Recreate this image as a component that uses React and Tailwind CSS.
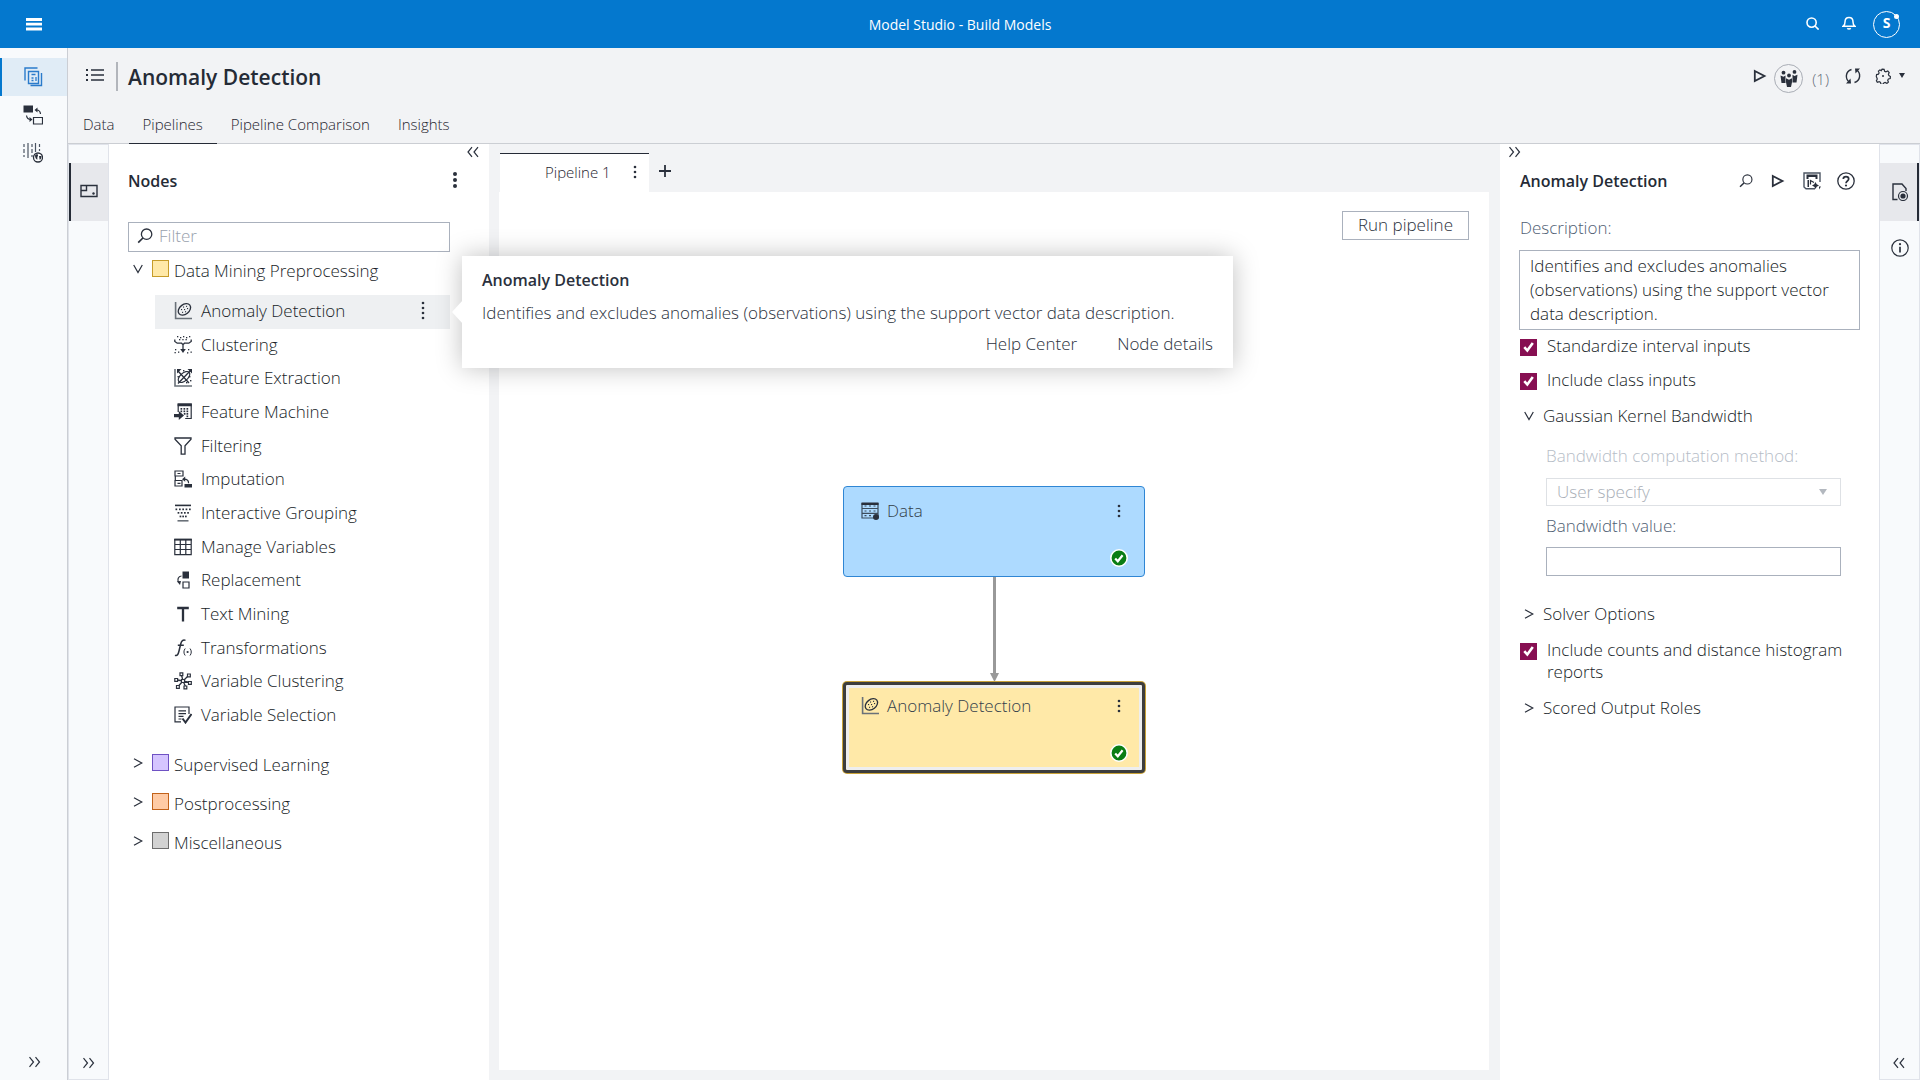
import { useState } from "react";

const INK = "#2a303c";

function Svg({ size = 18, children, className = "", w, ...rest }) {
  return (
    <svg width={w || size} height={size} viewBox={`0 0 ${w || size} ${size}`} fill="none" stroke={INK} strokeWidth="1.2" className={"shrink-0 " + className} aria-hidden="true" {...rest}>
      {children}
    </svg>
  );
}

function Fill({ d }) {
  return <path d={d} fill={INK} stroke="none" />;
}

function Dots({ points, s = 1.4 }) {
  return points.map(([x, y], i) => <rect key={i} x={x} y={y} width={s} height={s} fill={INK} stroke="none" />);
}

function Kebab({ n = 3, r = 1.4, gap = 5 }) {
  const h = (n - 1) * gap + 4;
  return (
    <svg width="6" height={h} viewBox={`0 0 6 ${h}`} fill={INK} aria-hidden="true">
      {Array.from({ length: n }, (_, i) => <circle key={i} cx="3" cy={2 + i * gap} r={r} />)}
    </svg>
  );
}

function DoubleChevron({ left }) {
  return (
    <Svg size={12} w={14}>
      <path d={left ? "M6 1.200 2 6l4 4.800M12 1.200 8 6l4 4.800" : "M1.500 1.200 5.500 6l-4 4.800M7.500 1.200 11.500 6l-4 4.800"} />
    </Svg>
  );
}

function Chevron({ open }) {
  return (
    <Svg size={10}>
      <path d={open ? "M.7 1 5 8.6 9.3 1" : "M1 .7 8.8 5 1 9.3"} />
    </Svg>
  );
}

const Play = () => <Svg size={14}><path d="M1.800 2 11.500 7 1.800 12Z" strokeWidth="1.800" /></Svg>;

const Lens = ({ size = 16 }) => (
  <svg width={size} height={size} viewBox="0 0 16 16" fill="none" stroke={INK} strokeWidth="1.3" className="shrink-0" aria-hidden="true">
    <circle cx="9.6" cy="6.2" r="5.2" />
    <path d="M5.9 10 1.2 14.6" strokeWidth="1.7" />
  </svg>
);

const AnomalyIcon = () => (
  <Svg>
    <path d="M1.6 0v16.5H18" stroke="#6a7179" strokeWidth="1.6" />
    <ellipse cx="10.4" cy="7.4" rx="6.9" ry="4.8" transform="rotate(-38 10.4 7.4)" strokeWidth="1.3" />
    <Dots points={[[9, 4.5], [12, 3.8], [7, 7], [10, 7], [13, 6], [8, 9.8], [11, 9.2]]} s={1.1} />
  </Svg>
);

const icons = {
  anomaly: <AnomalyIcon />,
  clustering: (
    <Svg>
      <Dots points={[[3, 0], [6, 1], [9, 0], [12, 1], [15, 0], [5, 3], [8.3, 3], [11.5, 3], [1, 13], [4, 15.5], [0.5, 16], [14, 13], [16.5, 15.5], [13, 16.2]]} s={1.3} />
      <path d="M.8 3.5v2l2.4 1.7h4.4L9 8.6l1.4-1.4h4.4l2.4-1.7v-2M9 8.6v6" strokeWidth="1.3" />
      <Fill d="M6.2 13h5.6L9 17Z" />
    </Svg>
  ),
  extraction: (
    <Svg>
      <path d="M1 0v17h17" stroke="#6a7179" strokeWidth="1.6" />
      <ellipse cx="10" cy="8" rx="7" ry="3.8" transform="rotate(-42 10 8)" strokeWidth="1.2" />
      <path d="M4 14.5 16.5 1.5M4 2l11 12" strokeWidth="1.3" />
      <Fill d="M13.5 0H18v4.5ZM3 0v4.5L7.5 0Z" />
      <Dots points={[[15, 7], [12, 13], [3.5, 7], [16, 11], [9, 1]]} />
    </Svg>
  ),
  machine: (
    <Svg>
      <path d="M4.2 9V1h13v14.5h-6" />
      <Fill d="M3.6.4h14.2v2.8H3.6ZM0 11h4.8V8l5.2 4.6L4.8 17v-2.8H0Z" />
      <Dots points={[[6.5, 5], [9.5, 5], [12.5, 5], [6.5, 7.5], [9.5, 7.5], [12.5, 7.5], [9.8, 10], [12.5, 10], [12.5, 12.5]]} s={1.7} />
    </Svg>
  ),
  filtering: <Svg><path d="M1 1h16v1.2l-6 6.6v8.4H7.2V8.8L1 2.2Z" strokeWidth="1.3" /></Svg>,
  imputation: (
    <Svg>
      <path d="M1 1h8v5H1ZM1 10.5h7V16H1ZM1.3 6v4.5M3.5 3.5h3M3.5 13.3h3M10 9.2c3 0 4.6 1.4 4.6 4" />
      <Fill d="M8 9.2 11.2 6.6v5.2ZM10.5 14H18v3.4h-7.5Z" />
    </Svg>
  ),
  grouping: (
    <Svg>
      <path d="M1 1.4h16" strokeWidth="1.6" />
      <path d="M3.5 16.8h11" stroke="#6a7179" strokeWidth="1.6" />
      <Dots points={[[1.5, 4.5], [5, 4.5], [8.3, 4.5], [11.6, 4.5], [15, 4.5], [3.6, 8], [6.8, 8], [10, 8], [13.2, 8], [5.6, 11.6], [8.3, 11.6], [11, 11.6]]} s={1.7} />
    </Svg>
  ),
  manage: (
    <Svg>
      <path d="M.8 1.5h16.4v15.2H.8ZM6.3 2v14.5M11.8 2v14.5M1 6.5h16M1 11.5h16" />
      <path d="M.2 1.6h17.6" strokeWidth="2" />
    </Svg>
  ),
  replacement: (
    <Svg>
      <Fill d="M8.5.5H15V7.5H8.5Z" />
      <path d="M9 11h6v6H9ZM7.5 5C4.2 5.2 3 8.5 4.600 11.5" />
      <Fill d="M2.8 10.2 7 10 6 14Z" />
    </Svg>
  ),
  text: <Svg><path d="M3.2 3h11.6M9 3v13.6" strokeWidth="2.3" /></Svg>,
  transform: (
    <Svg>
      <path d="M1 16.3c2.2 1 3.2-.8 4-4.3L6.7 5c.8-3 2.3-4.6 4.8-3.6M3.8 6.2h6" strokeWidth="1.5" />
      <path d="M11.2 9.5c-1.7 2-1.7 5 0 7M16 9.5c1.7 2 1.7 5 0 7" strokeWidth="1" />
      <circle cx="13.6" cy="13" r="1.1" fill={INK} stroke="none" />
    </Svg>
  ),
  varcluster: (
    <Svg>
      <path d="M9 9 3.5 8M9 9 7.5 3M9 9l5-5M9 9l6.5 1.5M9 9l2.5 5.5M9 9l-4.5 5" strokeWidth="1.3" />
      <g fill="#fff" strokeWidth="1.2">
        <path d="M7.5 7.5h3v3h-3ZM.8 6.5h2.8v2.8H.8ZM6 .8h2.8v2.8H6ZM13.5 2h2.8v2.8h-2.8ZM14.5 9.5h2.8v2.8h-2.8ZM10 14h2.8v2.8H10ZM2.5 13.5h2.8v2.8H2.5Z" />
      </g>
    </Svg>
  ),
  varselect: (
    <Svg>
      <path d="M7 15.8H1V1h14v7M4.5 4.8h7.5M4.5 7.6h7.5M4.5 10.4h5M4.5 13h3" />
      <path d="m8.5 12.5 3 4L17.5 8" strokeWidth="2" />
    </Svg>
  ),
};

const preprocessing = [
  ["Anomaly Detection", "anomaly"],
  ["Clustering", "clustering"],
  ["Feature Extraction", "extraction"],
  ["Feature Machine", "machine"],
  ["Filtering", "filtering"],
  ["Imputation", "imputation"],
  ["Interactive Grouping", "grouping"],
  ["Manage Variables", "manage"],
  ["Replacement", "replacement"],
  ["Text Mining", "text"],
  ["Transformations", "transform"],
  ["Variable Clustering", "varcluster"],
  ["Variable Selection", "varselect"],
];

const groups = [
  ["Supervised Learning", "border-[#6f52c4] bg-[#d5c5ff]"],
  ["Postprocessing", "border-[#c2621a] bg-[#ffcba5]"],
  ["Miscellaneous", "border-[#6d6d6d] bg-[#d2d2d2]"],
];

function TopBar() {
  return (
    <header className="grid h-12 shrink-0 grid-cols-[1fr_auto_1fr] items-center bg-[#0478ce] text-white">
      <button aria-label="Menu" className="ml-[26px] w-4">
        <svg width="16" height="14" viewBox="0 0 16 14" fill="#fff" aria-hidden="true"><path d="M0 1h16v3H0ZM0 5.8h16v2.6H0ZM0 10.5h16v3H0Z" /></svg>
      </button>
      <h1 className="pt-0.5 text-[14px] font-normal leading-5">Model Studio - Build Models</h1>
      <div className="flex items-center justify-end pr-5">
        <button aria-label="Search" className="mr-[23px] pb-0.5">
          <svg width="13" height="13" viewBox="0 0 13 13" fill="none" stroke="#fff" strokeWidth="1.6" aria-hidden="true"><circle cx="5.6" cy="5.6" r="4.6" /><path d="m9 9 3.6 3.600" /></svg>
        </button>
        <button aria-label="Notifications" className="mr-[17px] pb-0.5">
          <svg width="14" height="14" viewBox="0 0 14 14" fill="none" stroke="#fff" strokeWidth="1.5" aria-hidden="true"><path d="M1.2 10.2c1.6-1 1.8-2.4 1.8-4.2C3 3.2 4.6 1.6 7 1.6S11 3.2 11 6c0 1.8.2 3.2 1.8 4.2Z" /><path d="M5.3 12.3c.8 1 2.6 1 3.4 0" /></svg>
        </button>
        <button aria-label="Account" className="relative flex size-[27px] items-center justify-center rounded-full border border-white pb-0.5 text-[14px] font-bold leading-4">
          S
          <span className="absolute right-0 top-0.5 size-[5px] rounded-full bg-white" />
        </button>
      </div>
    </header>
  );
}

function AppRail() {
  return (
    <nav aria-label="Applications" className="flex w-[68px] shrink-0 flex-col border-r border-[#cbced4] bg-[#f8fafc] pt-[10px]">
      <button aria-label="Build models" className="flex h-[38px] items-center justify-center border-l-2 border-[#0478ce] bg-[#e0ecf6] pr-0.5">
        <Svg size={20} stroke="#2a7bcb"><path d="M1 13.5V1h12.5M4.500 4.5h10v12h-10ZM17.500 6v12.500H6.5" strokeWidth="1.4" /><path d="M7.5 7.5h4M12 10v4M7.5 11h2M7.5 13.500h2" strokeWidth="1.3" /></Svg>
      </button>
      <button aria-label="Replace models" className="flex h-[38px] items-center justify-center pr-0.5">
        <Svg size={20}><Fill d="M.5.5h9.500v7H.5Z" /><path d="M10.5 12.5h9v6.500h-9ZM13.5 5c2.5 0 3.8 1.5 4 4M3.5 10.5c.3 2.5 1.5 4 4.500 4" /><Fill d="m11.5 5 3-2.600v5.200ZM9.5 14.500 6.5 12v5Z" /></Svg>
      </button>
      <button aria-label="Global data" className="flex h-[38px] items-center justify-center pr-0.5">
        <Svg size={20}><path d="M1 1v3M1 6v4M1 12v2M5 0v15M9 1v3M9 6v4M9 12v2M12.5 0v9M16.5 1v3M16.5 6v2" stroke="#4c5563" strokeWidth="1.2" /><circle cx="15" cy="14.5" r="4.5" fill="#fff" strokeWidth="1.3" /><Fill d="M12 12.5c1-1.800 3.500-1.500 3 0s-1 2-.5 4c-1.500 0-2.500-2.200-2.500-4ZM16 13h2.500c0 2.500-1 3.500-1.800 3.700Z" /></Svg>
      </button>
      <button aria-label="Expand application bar" className="mb-3 ml-7 mt-auto w-4"><DoubleChevron /></button>
    </nav>
  );
}

const tabs = ["Data", "Pipelines", "Pipeline Comparison", "Insights"];

function ProjectHeader() {
  return (
    <div className="border-b border-[#cbced3] bg-[#f2f3f5]">
      <div className="flex h-[57px] items-center">
        <button aria-label="Project list" className="ml-[18px] pb-[3px]">
          <Svg size={14} w={18}><path d="M5 2h13M5 7h13M5 12h13" strokeWidth="1.3" /><Dots points={[[0, 1], [0, 6], [0, 11]]} s={2} /></Svg>
        </button>
        <span className="ml-3 h-[29px] w-0.5 bg-[#b2b5bb]" />
        <h2 className="ml-[10px] text-[21px] font-semibold leading-7 text-[#252b36]">Anomaly Detection</h2>
        <div className="ml-auto flex items-center pr-[15px]">
          <button aria-label="Run" className="mb-0.5 mr-[7px]"><Play /></button>
          <button aria-label="Collaborators" className="mt-1 flex size-[29px] items-center justify-center rounded-full border border-[#a9adb5]">
            <Svg size={18}>
              <g fill={INK} stroke="none"><circle cx="3.5" cy="2.700" r="1.9" /><circle cx="14.5" cy="1.900" r="1.9" /><circle cx="9" cy="5.500" r="1.9" /><path d="M.5 5.500l3 1.200 2-1.200v7.500H1.500ZM12.500 4.700l2 1.200 3-1.200-1 7.700h-4ZM6 8.300l3 1.500 3-1.500v4l-1 4.700H7l-1-4.700Z" /></g>
            </Svg>
          </button>
          <span className="ml-[9px] mt-1 text-[15px] leading-5 text-[#636a77]">(1)</span>
          <button aria-label="Refresh" className="mb-0.5 ml-4">
            <Svg size={16}><path d="M6.500 1.500C0 3.500.2 11 4.200 14M9.500 14.500c6.500-2 6.300-9.500 2.300-12.500" strokeWidth="1.400" /><Fill d="M10 .5h5L10.500 5.500ZM6 15.500H1L5.500 10.500Z" /></Svg>
          </button>
          <button aria-label="Settings" className="mb-0.5 ml-[14px] flex items-center gap-2">
            <Svg size={16}>
              <path d="m6.700 1.200 2 .1.500 1.900 1.300.6 1.900-.8 1.400 1.500-.8 1.800.5 1.300 1.500.9-.2 2-1.800.5-.7 1.300.7 1.800-1.500 1.300-1.800-.9-1.300.5-1 1.400-1.900-.3-.4-1.800-1.300-.7-1.900.7L1 12.700l.9-1.700-.5-1.300L.9 8.500l.3-1.900 1.800-.4.700-1.300L3 3.100l1.500-1.200 1.400.7Z" strokeWidth="1.200" transform="translate(.4 0)" />
              <circle cx="8" cy="8" r="1" fill={INK} stroke="none" />
            </Svg>
            <svg width="6" height="5" fill={INK} aria-hidden="true"><path d="M0 0h6L3 5Z" /></svg>
          </button>
        </div>
      </div>
      <div role="tablist" className="flex h-[38px] pl-px text-[15px] leading-5 text-[#1f2530]">
        {tabs.map((t) => (
          <button
            key={t}
            role="tab"
            aria-selected={t === "Pipelines"}
            className={"-mb-px flex items-center border-b px-[14px] " + (t === "Pipelines" ? "border-[#252b36]" : "border-transparent")}
          >
            {t}
          </button>
        ))}
      </div>
    </div>
  );
}

function Popover() {
  return (
    <div role="dialog" aria-label="Anomaly Detection" className="absolute -top-[39px] left-[307px] z-10 w-[771px] bg-white px-5 pb-3 pt-3 text-[#2b313d] shadow-[0_0_24px_rgba(0,0,0,0.25)]">
      <svg width="11" height="24" viewBox="0 0 11 24" fill="#fff" className="absolute -left-[10px] top-11" aria-hidden="true"><path d="M11 0v24L0 12Z" /></svg>
      <h3 className="text-[16px] font-semibold leading-6">Anomaly Detection</h3>
      <p className="mt-[9px] whitespace-nowrap leading-6">Identifies and excludes anomalies (observations) using the support vector data description.</p>
      <div className="mt-[7px] flex justify-end gap-10 leading-6">
        <button>Help Center</button>
        <button>Node details</button>
      </div>
    </div>
  );
}

function NodesPanel() {
  return (
    <>
      <div className="flex w-[41px] shrink-0 flex-col border border-[#e0e3ea] bg-[#f8fafc] pt-[18px]">
        <button aria-label="Nodes" className="flex h-[58px] items-center justify-center border-l-2 border-[#252b36] bg-[#e7e8ec] pb-0.5 pr-0.5">
          <Svg size={14} w={18}><path d="M1 1.5h16v11H1ZM1 6.5h5.500V1.500" strokeWidth="1.4" /><circle cx="13.5" cy="9.5" r="1.2" fill={INK} stroke="none" /></Svg>
        </button>
        <button aria-label="Expand" className="mb-[10px] ml-[13px] mt-auto w-4"><DoubleChevron /></button>
      </div>
      <section aria-label="Nodes" className="w-[380px] shrink-0 bg-white pl-[19px] pr-[39px]">
        <div className="-mr-[30px] flex h-4 items-center justify-end"><button aria-label="Collapse nodes"><DoubleChevron left /></button></div>
        <div className="flex h-[42px] items-center justify-between">
          <h3 className="text-[16px] font-semibold leading-6 text-[#252b36]">Nodes</h3>
          <button aria-label="Nodes menu" className="-mr-[11px] px-[3px] pb-0.5"><Kebab r={2} gap={6} /></button>
        </div>
        <label className="mt-5 flex h-[30px] items-center gap-[6px] border border-[#aab1bd] px-2 pb-0.5">
          <Lens />
          <input aria-label="Filter" placeholder="Filter" className="w-full outline-none placeholder:text-[#98a1ad]" />
        </label>
        <div className="flex h-[43px] items-center pb-1.5">
          <button aria-label="Collapse group" className="-mt-1 ml-[5px]"><Chevron open /></button>
          <span className="-mt-1 ml-[9px] size-[17px] border border-[#c69c29] bg-[#ffe9a8]" />
          <span className="ml-[5px]">Data Mining Preprocessing</span>
        </div>
        <ul className="ml-[27px] grid h-[438px] auto-rows-fr">
          {preprocessing.map(([name, icon], i) => (
            <li key={name} className={"relative flex items-center pb-0.5 pl-[19px] " + (i === 0 ? "bg-[#eef0f2]" : "")}>
              <button className="flex items-center gap-[9px] leading-6">{icons[icon]}{name}</button>
              {i === 0 && (
                <>
                  <button aria-label="Node menu" className="ml-auto mr-6"><Kebab n={4} r={1.3} /></button>
                  <Popover />
                </>
              )}
            </li>
          ))}
        </ul>
        <div className="mt-3">
          {groups.map(([name, color]) => (
            <div key={name} className="flex h-[39px] items-center">
              <button aria-label={"Expand " + name} className="-mt-1 ml-[5px]"><Chevron /></button>
              <span className={"-mt-1 ml-[9px] size-[17px] border " + color} />
              <span className="ml-[5px]">{name}</span>
            </div>
          ))}
        </div>
      </section>
    </>
  );
}

const Done = () => (
  <svg width="18" height="18" viewBox="0 0 18 18" aria-label="Completed" role="img">
    <circle cx="9" cy="9" r="8.2" fill="#0a7d14" stroke="#fff" strokeWidth="1.6" />
    <path d="m5.2 9.4 2.6 2.8 4.800-6" fill="none" stroke="#fff" strokeWidth="2.2" />
  </svg>
);

function FlowNode({ name, icon, className }) {
  return (
    <div className={"flex h-[91px] w-[302px] flex-col justify-between rounded text-[#333e4a] " + className}>
      <div className="flex items-center">
        {icon}
        <span className="ml-2 leading-6">{name}</span>
        <button aria-label={name + " menu"} className="ml-auto mr-[6px]"><Kebab r={1.3} /></button>
      </div>
      <div className="flex justify-end"><Done /></div>
    </div>
  );
}

function Canvas() {
  return (
    <main className="flex min-w-0 flex-1 flex-col bg-[#f2f3f5] pb-[10px] pl-[10px] pr-[11px] pt-[9px]">
      <div className="flex h-[39px]">
        <div className="ml-px flex w-[149px] items-center border-t border-[#252b36] bg-white pb-0.5 pl-[45px]">
          <button role="tab" className="text-[15px] leading-5 text-[#1f2530]">Pipeline 1</button>
          <button aria-label="Pipeline menu" className="ml-auto mr-[11px]"><Kebab r={1.3} /></button>
        </div>
        <button aria-label="Add pipeline" className="ml-[10px] self-center pb-1"><Svg size={12}><path d="M6 0v12M0 6h12" strokeWidth="1.8" /></Svg></button>
      </div>
      <div className="flex flex-1 flex-col bg-white pr-5 pt-[19px]">
        <button className="flex h-[29px] items-center self-end border border-[#aab1bd] px-[15px] pb-0.5 text-[#2b313d]">Run pipeline</button>
        <div className="ml-5 mt-[246px] flex flex-col items-center">
          <FlowNode
            name="Data"
            className="border border-[#2f86d4] bg-[#addaff] pb-[9px] pl-[17px] pr-4 pt-3"
            icon={
              <Svg size={18}>
                <path d="M1 1.5h16v14.500H1ZM1 6.5h16M1 11.3h16M3.5 4h2M8 4h2M12.5 4h2M3.5 9h2M8 9h2M12.5 9h2M3.5 13.7h2M8 13.7h2" stroke="#3d4c5c" />
                <Fill d="M.5.500h17v2.500H.5Z" /><circle cx="15" cy="15" r="3" fill={INK} stroke="none" />
              </Svg>
            }
          />
          <svg width="9" height="105" viewBox="0 0 9 105" fill="#999" aria-hidden="true"><path d="M3 0h3v96H9L4.500 105 0 96h3Z" /></svg>
          <FlowNode
            name="Anomaly Detection"
            icon={<AnomalyIcon />}
            className="border-[3px] border-[#3d3d3d] bg-[#ffe9a8] pb-[8px] pl-[15px] pr-[14px] pt-[9px] shadow-[inset_0_0_0_3px_#eeeeee,0_0_0_1px_#c9a238]"
          />
        </div>
      </div>
    </main>
  );
}

function Check({ label, className = "" }) {
  const [on, setOn] = useState(true);
  return (
    <label className={"flex gap-[10px] " + className}>
      <span className="relative mt-1 size-[17px] shrink-0">
        <input type="checkbox" checked={on} onChange={() => setOn(!on)} className="block size-[17px] appearance-none border border-[#870f52] checked:bg-[#870f52]" />
        {on && <svg width="17" height="17" viewBox="0 0 17 17" fill="none" stroke="#fff" strokeWidth="2.6" className="pointer-events-none absolute inset-0" aria-hidden="true"><path d="m4.3 8.2 3 3.3 5.5-7.5" /></svg>}
      </span>
      <span className="leading-[22px]">{label}</span>
    </label>
  );
}

function Section({ title, open }) {
  return (
    <button aria-expanded={!!open} className="flex items-center gap-[9px] pl-1 leading-6"><Chevron open={open} />{title}</button>
  );
}

function Properties() {
  return (
    <>
      <aside aria-label="Properties" className="w-[379px] shrink-0 bg-white pl-5 pr-[19px]">
        <div className="-ml-3 flex h-4 items-center"><button aria-label="Collapse properties"><DoubleChevron /></button></div>
        <div className="flex h-[42px] items-center">
          <h3 className="text-[16px] font-semibold leading-6 text-[#252b36]">Anomaly Detection</h3>
          <button aria-label="Search properties" className="ml-auto"><Lens size={14} /></button>
          <button aria-label="Run node" className="ml-[18px]"><Play /></button>
          <button aria-label="Save node" className="ml-[18px]">
            <Svg size={18}><path d="M12 16.8H3L1 15V1h16v9" stroke="#4c5563" strokeWidth="1.4" /><Fill d="M3.5 2.5h11V7h-2V5h-7v2h-2ZM4.5 8h1.5v7H4.5ZM12.5 10l1.2 2.3L16 13.5l-2.3 1.2-1.2 2.3-1.200-2.3L9 13.5l2.300-1.200ZM16 14.5h2L16 17.5Z" /><path d="M7.5 12.5V8.5l3.5 2" /></Svg>
          </button>
          <button aria-label="Help" className="ml-[16px] mr-[5px]">
            <Svg size={18}><circle cx="9" cy="9" r="8.2" strokeWidth="1.3" /><path d="M6.3 7c0-3.300 5.400-3.300 5.400 0 0 2-2.700 2-2.700 4.200" strokeWidth="1.7" /><circle cx="9" cy="13.5" r="1.1" fill={INK} stroke="none" /></Svg>
          </button>
        </div>
        <label htmlFor="description" className="mt-[14px] block leading-6 text-[#4f5e73]">Description:</label>
        <textarea id="description" rows={3} defaultValue="Identifies and excludes anomalies (observations) using the support vector data description." className="-ml-px mt-[10px] block h-20 w-[341px] resize-none overflow-hidden border border-[#aab1bd] px-[10px] py-[3px] leading-6 outline-none" />
        <Check label="Standardize interval inputs" className="mt-[5px]" />
        <Check label="Include class inputs" className="mt-3" />
        <div className="mt-[13px]"><Section title="Gaussian Kernel Bandwidth" open /></div>
        <div className="ml-[26px] mr-[19px]">
          <label htmlFor="method" className="mt-4 block leading-6 text-[#b6bdc7]">Bandwidth computation method:</label>
          <div className="relative mt-[10px]">
            <select id="method" disabled className="block h-[28px] w-full appearance-none border border-[#dee1e5] bg-white pl-[10px] leading-6 text-[#a8aeb6] opacity-100">
              <option>User specify</option>
            </select>
            <svg width="8" height="6" fill="#b3b8bf" className="pointer-events-none absolute right-[14px] top-[11px]" aria-hidden="true"><path d="M0 0h8L4 6Z" /></svg>
          </div>
          <label htmlFor="bandwidth" className="mt-2 block leading-6 text-[#4f5e73]">Bandwidth value:</label>
          <input id="bandwidth" className="mt-[9px] block h-[29px] w-full border border-[#aab1bd] px-[10px] outline-none" />
        </div>
        <div className="mt-[26px]"><Section title="Solver Options" /></div>
        <Check label="Include counts and distance histogram reports" className="mt-[13px]" />
        <div className="mt-[13px]"><Section title="Scored Output Roles" /></div>
      </aside>
      <div className="flex w-[41px] shrink-0 flex-col border border-[#e0e3ea] bg-[#f8fafc] pt-[18px]">
        <button aria-label="Node properties" className="flex h-[58px] items-center justify-center border-r-2 border-[#252b36] bg-[#e7e8ec] pl-0.5">
          <Svg size={18}><path d="M6.500 16.5H2V1h9l4 4.5v2.5" strokeWidth="1.4" /><circle cx="12" cy="13" r="4.5" strokeWidth="1.2" /><circle cx="12" cy="13" r="2.6" fill={INK} stroke="none" /></Svg>
        </button>
        <button aria-label="Information" className="mt-[18px] flex justify-center">
          <Svg size={18}><circle cx="9" cy="9" r="8.2" strokeWidth="1.2" /><path d="M9 7.8v5.700" strokeWidth="1.7" /><circle cx="9" cy="5.2" r="1.1" fill={INK} stroke="none" /></Svg>
        </button>
        <button aria-label="Expand" className="mb-[10px] ml-3 mt-auto w-4"><DoubleChevron left /></button>
      </div>
    </>
  );
}

export default function App() {
  return (
    <div className="flex min-h-screen flex-col bg-white font-['Open_Sans',sans-serif] text-[17px] font-light leading-6 text-[#171d27]">
      <TopBar />
      <div className="flex flex-1">
        <AppRail />
        <div className="flex min-w-0 flex-1 flex-col">
          <ProjectHeader />
          <div className="flex flex-1">
            <NodesPanel />
            <Canvas />
            <Properties />
          </div>
        </div>
      </div>
    </div>
  );
}
